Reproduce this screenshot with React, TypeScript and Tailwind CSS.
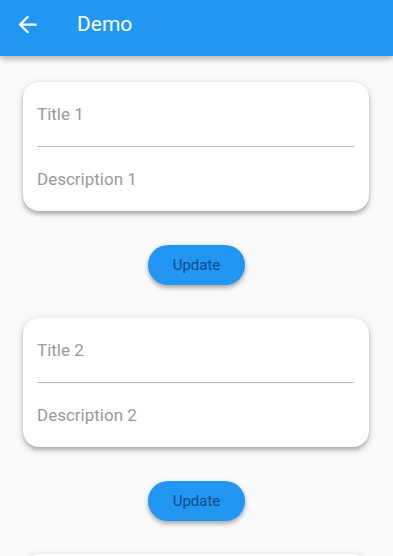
import React from "react";

function Card({ n }: { n: number }) {
  return (
    <div className="ml-[23px] mr-[24px] rounded-[16px] bg-white pl-[14px] pr-[15px] shadow-[0_3px_4px_rgba(0,0,0,0.28),0_1px_10px_rgba(0,0,0,0.10)]">
      <div className="flex h-[64px] items-center pt-[2px] text-[17px] text-[#9a9a9a]">Title {n}</div>
      <div className="h-px bg-[#bdbdbd]" />
      <div className="flex h-[64px] items-center pt-[2px] text-[17px] text-[#9a9a9a]">Description {n}</div>
    </div>
  );
}

function UpdateButton() {
  return (
    <div className="flex justify-center pt-[34px] pb-[33px]">
      <button className="h-[40px] w-[97px] rounded-full bg-[#2196f3] text-[15px] font-normal text-[#134a88] shadow-[0_3px_4px_rgba(0,0,0,0.25),0_1px_6px_rgba(0,0,0,0.12)]">
        Update
      </button>
    </div>
  );
}

export default function App() {
  return (
    <div className="h-[556px] overflow-hidden bg-[#fafafa]" style={{ fontFamily: "Roboto, 'Liberation Sans', sans-serif" }}>
      <div className="relative z-10 flex h-[56px] items-center bg-[#2196f3] pb-[7px] shadow-[0_3px_6px_rgba(0,0,0,0.28)]">
        <div className="ml-[14px] flex h-[27px] w-[27px] items-center justify-center">
          <svg viewBox="0 0 24 24" width="27" height="27" fill="white">
            <path d="M20 11H7.83l5.59-5.59L12 4l-8 8 8 8 1.41-1.41L7.83 13H20v-2z" />
          </svg>
        </div>
        <div className="ml-[36px] text-[21px] font-normal text-white">Demo</div>
      </div>
      <div className="pt-[26px]">
        <Card n={1} />
        <UpdateButton />
        <Card n={2} />
        <UpdateButton />
        <Card n={3} />
      </div>
    </div>
  );
}
